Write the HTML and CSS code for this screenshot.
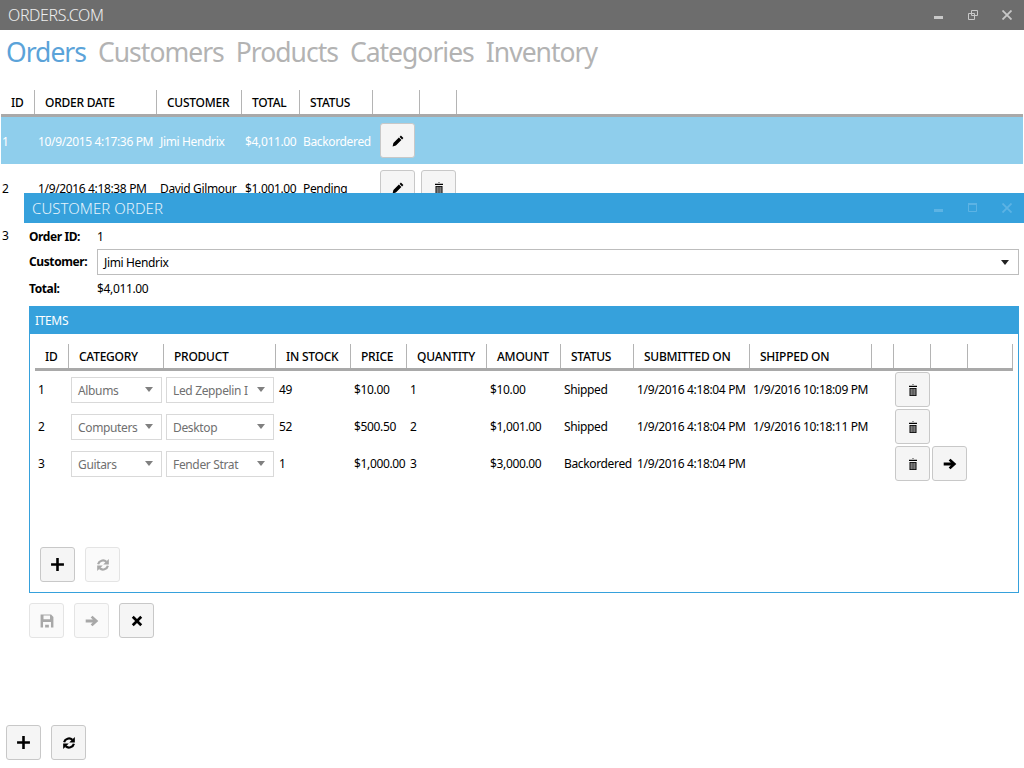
FILE: index.html
```html
<!DOCTYPE html>
<html lang="en">
<head>
<meta charset="utf-8">
<title>Orders.com</title>
<link rel="stylesheet" href="styles.css">
</head>
<body>
<svg class="sprite" xmlns="http://www.w3.org/2000/svg">
  <symbol id="i-pencil" viewBox="0 0 12 12"><path d="M8.9.6l2.5 2.500-1.300 1.300-2.500-2.500zM6.900 2.600l2.500 2.500-5.500 5.500-3.300.8.800-3.300z" fill="currentColor"/></symbol>
  <symbol id="i-trash" viewBox="0 0 12 12"><path d="M5 .2h2v.7H5z" fill="currentColor" opacity=".5"/><path d="M2 1.800h8v1.300H2zM2.500 4h7v8h-7zM3.700 4.800v6.400h.8V4.800zm1.900 0v6.400h.8V4.800zm1.900 0v6.400h.8V4.800z" fill="currentColor" fill-rule="evenodd"/></symbol>
  <symbol id="i-plus" viewBox="0 0 14 14"><path d="M5.800 1h2.400v4.800H13v2.400H8.200V13H5.800V8.200H1V5.800h4.800z" fill="currentColor"/></symbol>
  <symbol id="i-refresh" viewBox="0 0 12 12"><path d="M1.800 5.400A4.300 4.300 0 0 1 8.900 3.300M10.200 6.600A4.300 4.300 0 0 1 3.100 8.700" fill="none" stroke="currentColor" stroke-width="1.900"/><path d="M11 .8V5.600H6.200zM1 11.200V6.400H5.800z" fill="currentColor"/></symbol>
  <symbol id="i-arrow" viewBox="0 0 14 14"><path d="M7.500 1.800L13.300 7l-5.800 5.200-1.800-1.800 2.100-1.900H.7v-3h7.100L5.700 3.600z" fill="currentColor"/></symbol>
  <symbol id="i-x" viewBox="0 0 12 12"><path d="M2.700.8L6 4.100 9.300.8l1.900 1.900L7.900 6l3.300 3.300-1.900 1.900L6 7.900l-3.300 3.300-1.900-1.900L4.100 6 .8 2.700z" fill="currentColor"/></symbol>
  <symbol id="i-save" viewBox="0 0 12 12"><path d="M.5.5h9L11.500 2.500v9H.5zM3 1.200v3.300h5.600V1.200zM2.600 6.800v4.700h1.800V9.200h3.200v2.300h1.800V6.800z" fill="currentColor" fill-rule="evenodd"/></symbol>
</svg>

<header class="app-bar">
  <span class="app-title">ORDERS.COM</span>
  <div class="win-controls">
    <svg class="win-icon" viewBox="0 0 10 10"><rect x="0" y="6" width="9" height="3" fill="currentColor"/></svg>
    <svg class="win-icon" viewBox="0 0 10 10"><path d="M3.500.5h6v5h-6zM.5 3.500h6v6h-6z" fill="none" stroke="currentColor"/></svg>
    <svg class="win-icon" viewBox="0 0 10 10"><path d="M.5.5l9 9M9.500.5l-9 9" fill="none" stroke="currentColor" stroke-width="1.800"/></svg>
  </div>
</header>

<nav class="nav">
  <span class="nav-item is-active">Orders</span>
  <span class="nav-item">Customers</span>
  <span class="nav-item">Products</span>
  <span class="nav-item">Categories</span>
  <span class="nav-item">Inventory</span>
</nav>

<main class="orders">
  <div class="orders-row orders-head">
    <div class="th">ID</div><div class="th">ORDER DATE</div><div class="th">CUSTOMER</div><div class="th">TOTAL</div><div class="th">STATUS</div><div class="th"></div><div class="th"></div><div class="th-end"></div>
  </div>
  <div class="orders-row order is-selected">
    <div class="td-id">1</div><div class="td">10/9/2015 4:17:36 PM</div><div class="td">Jimi Hendrix</div><div class="td">$4,011.00</div><div class="td">Backordered</div>
    <div class="td-btn"><button class="btn"><svg class="ico-s"><use href="#i-pencil"/></svg></button></div>
    <div class="td-btn"></div>
  </div>
  <div class="orders-row order">
    <div class="td-id">2</div><div class="td">1/9/2016 4:18:38 PM</div><div class="td">David Gilmour</div><div class="td">$1,001.00</div><div class="td">Pending</div>
    <div class="td-btn"><button class="btn"><svg class="ico-s"><use href="#i-pencil"/></svg></button></div>
    <div class="td-btn"><button class="btn"><svg class="ico-s"><use href="#i-trash"/></svg></button></div>
  </div>
  <div class="orders-row order">
    <div class="td-id">3</div>
  </div>
</main>

<footer class="page-actions">
  <button class="btn"><svg class="ico-l"><use href="#i-plus"/></svg></button>
  <button class="btn"><svg class="ico-m"><use href="#i-refresh"/></svg></button>
</footer>

<section class="modal">
  <header class="modal-bar">
    <span class="modal-title">CUSTOMER ORDER</span>
    <div class="win-controls is-dim">
      <svg class="win-icon" viewBox="0 0 10 10"><rect x="0" y="6" width="9" height="3" fill="currentColor"/></svg>
      <svg class="win-icon" viewBox="0 0 10 10"><path d="M.5.5h8v8h-8z" fill="none" stroke="currentColor"/><rect x="0" y="0" width="9" height="2" fill="currentColor"/></svg>
      <svg class="win-icon" viewBox="0 0 10 10"><path d="M.5.5l9 9M9.500.5l-9 9" fill="none" stroke="currentColor" stroke-width="1.800"/></svg>
    </div>
  </header>
  <div class="modal-body">
    <div class="form">
      <div class="lbl lbl-id">Order ID:</div><div class="val val-id">1</div>
      <div class="lbl">Customer:</div>
      <div class="combo combo-wide"><span>Jimi Hendrix</span><i class="caret caret-dark"></i></div>
      <div class="lbl lbl-total">Total:</div><div class="val val-total">$4,011.00</div>
    </div>

    <section class="group">
      <h2 class="group-head">ITEMS</h2>
      <div class="group-body">
        <div class="items-row items-head">
          <div class="th">ID</div><div class="th">CATEGORY</div><div class="th">PRODUCT</div><div class="th">IN STOCK</div><div class="th">PRICE</div><div class="th">QUANTITY</div><div class="th">AMOUNT</div><div class="th">STATUS</div><div class="th">SUBMITTED ON</div><div class="th">SHIPPED ON</div><div class="th"></div><div class="th"></div><div class="th"></div><div class="th"></div>
        </div>
        <div class="items-row item">
          <div class="it">1</div>
          <div class="it-combo"><div class="combo"><span>Albums</span><i class="caret"></i></div></div>
          <div class="it-combo"><div class="combo"><span>Led Zeppelin I</span><i class="caret"></i></div></div>
          <div class="it">49</div><div class="it">$10.00</div><div class="it">1</div><div class="it">$10.00</div><div class="it">Shipped</div><div class="it">1/9/2016 4:18:04 PM</div><div class="it">1/9/2016 10:18:09 PM</div>
          <div class="it-btns"><button class="btn"><svg class="ico-s"><use href="#i-trash"/></svg></button></div>
        </div>
        <div class="items-row item">
          <div class="it">2</div>
          <div class="it-combo"><div class="combo"><span>Computers</span><i class="caret"></i></div></div>
          <div class="it-combo"><div class="combo"><span>Desktop</span><i class="caret"></i></div></div>
          <div class="it">52</div><div class="it">$500.50</div><div class="it">2</div><div class="it">$1,001.00</div><div class="it">Shipped</div><div class="it">1/9/2016 4:18:04 PM</div><div class="it">1/9/2016 10:18:11 PM</div>
          <div class="it-btns"><button class="btn"><svg class="ico-s"><use href="#i-trash"/></svg></button></div>
        </div>
        <div class="items-row item">
          <div class="it">3</div>
          <div class="it-combo"><div class="combo"><span>Guitars</span><i class="caret"></i></div></div>
          <div class="it-combo"><div class="combo"><span>Fender Strat</span><i class="caret"></i></div></div>
          <div class="it">1</div><div class="it">$1,000.00</div><div class="it">3</div><div class="it">$3,000.00</div><div class="it">Backordered</div><div class="it">1/9/2016 4:18:04 PM</div><div class="it"></div>
          <div class="it-btns"><button class="btn"><svg class="ico-s"><use href="#i-trash"/></svg></button><button class="btn"><svg class="ico-m"><use href="#i-arrow"/></svg></button></div>
        </div>
        <div class="group-actions">
          <button class="btn"><svg class="ico-l"><use href="#i-plus"/></svg></button>
          <button class="btn is-disabled"><svg class="ico-m"><use href="#i-refresh"/></svg></button>
        </div>
      </div>
    </section>

    <div class="modal-actions">
      <button class="btn is-disabled"><svg class="ico-m"><use href="#i-save"/></svg></button>
      <button class="btn is-disabled"><svg class="ico-m"><use href="#i-arrow"/></svg></button>
      <button class="btn"><svg class="ico-s"><use href="#i-x"/></svg></button>
    </div>
  </div>
</section>
</body>
</html>
```

FILE: styles.css
```css
* { box-sizing: border-box; }
html, body { margin: 0; height: 768px; overflow: hidden; }
body {
  position: relative;
  display: flex;
  flex-direction: column;
  background: #fff;
  color: #000;
  font-family: "Noto Sans", "Open Sans", sans-serif;
  font-size: 12px;
  letter-spacing: -0.35px;
}
.sprite { display: none; }

/* Window chrome */
.app-bar {
  height: 30px;
  flex: none;
  display: flex;
  align-items: center;
  justify-content: space-between;
  background: #6d6d6d;
  color: #fff;
  padding: 0 12px 0 8px;
}
.app-title { font-size: 16px; font-weight: 300; letter-spacing: -0.4px; color: #eee; }
.win-controls { display: flex; gap: 24px; color: #c8c8c8; }
.win-controls.is-dim { color: #5cb3e4; }
.win-icon { width: 10px; height: 10px; display: block; }

/* Navigation */
.nav {
  height: 60px;
  flex: none;
  display: flex;
  gap: 12px;
  padding: 2px 0 0 6px;
  font-size: 26.5px;
  line-height: 40px;
  letter-spacing: -1px;
  color: #b3b3b3;
}
.is-active { color: #5ba3d9; }

/* Orders table */
.orders { padding-left: 1px; flex: 1; min-height: 0; }
.orders-row {
  display: grid;
  grid-template-columns: 34px 122px 85px 58px 73px 47px 37px 1fr;
}
.orders-head { height: 27px; border-bottom: 3px solid #a9a9a9; margin-right: 1px; }
.th {
  display: flex;
  align-items: center;
  padding-left: 10px;
  border-right: 1px solid #b4b4b4;
  font-weight: 500;
  letter-spacing: -0.25px;
  white-space: nowrap;
  color: #000;
}
.th-end { min-width: 0; }
.order { height: 47px; margin-right: 1px; align-items: center; }
.order.is-selected { background: #8fceec; color: #fff; }
.td, .td-id { padding: 2px 0 0 3px; white-space: nowrap; }
.td-id { padding-left: 1px; }
.td-btn { display: flex; align-items: center; padding-left: 7px; }
.orders-row .td-btn + .td-btn { padding-left: 1px; }

/* Buttons */
.btn {
  flex: none;
  width: 35px;
  height: 35px;
  display: flex;
  align-items: center;
  justify-content: center;
  padding: 0;
  border: 1px solid #c8c8c8;
  border-radius: 3px;
  background: #f5f5f5;
  color: #000;
}
.btn.is-disabled { background: #fafafa; border-color: #e4e4e4; color: #a8a8a8; }
.ico-s { width: 12px; height: 12px; }
.ico-m { width: 14px; height: 14px; }
.ico-l { width: 15px; height: 15px; }

.page-actions { flex: none; display: flex; gap: 10px; padding: 0 0 8px 6px; }

/* Modal window */
.modal {
  position: absolute;
  left: 24px;
  right: 0;
  top: 193px;
  height: 470px;
  background: #fff;
}
.modal-bar {
  height: 30px;
  display: flex;
  align-items: center;
  justify-content: space-between;
  padding: 0 12px 0 8px;
  background: #36a1dc;
}
.modal-title { font-size: 15px; font-weight: 300; letter-spacing: 0.05px; color: #e6f3fb; }
.modal-body { padding: 0 5px; }

.form {
  display: grid;
  grid-template-columns: 68px 1fr;
  align-items: center;
  padding-top: 5px;
}
.lbl { font-weight: 700; letter-spacing: -0.4px; line-height: 18px; }
.val { line-height: 18px; }
.lbl-id { height: 21px; }
.val-id { height: 21px; }
.lbl-total { height: 27px; line-height: 27px; }
.val-total { height: 27px; line-height: 27px; }
.combo {
  display: flex;
  align-items: center;
  justify-content: space-between;
  height: 26px;
  padding: 0 6px;
  border: 1px solid #d9d9d9;
  color: #707070;
  white-space: nowrap;
  overflow: hidden;
}
.combo span { padding-top: 1px; }
.combo-wide { border-color: #bdbdbd; color: #000; }
.caret {
  flex: none;
  width: 0;
  height: 0;
  margin: 0 2px 0 0;
  border-left: 4px solid transparent;
  border-right: 4px solid transparent;
  border-top: 5px solid #808080;
}
.caret-dark { border-top-color: #222; margin-right: 3px; }

/* Items group */
.group { margin-top: 4px; border: 1px solid #36a1dc; height: 287px; }
.group-head {
  margin: 0;
  height: 27px;
  padding-left: 5px;
  background: #36a1dc;
  color: #fff;
  font-size: 12px;
  font-weight: 400;
  line-height: 27px;
}
.group-body { display: flex; flex-direction: column; height: 258px; padding: 10px 5px 0 5px; }
.items-row {
  display: grid;
  grid-template-columns: 34px 95px 112px 75px 56px 80px 74px 73px 116px 122px 22px 37px 37px 1fr;
}
.items-head { height: 27px; flex: none; border-bottom: 3px solid #a9a9a9; }
.item { height: 37px; flex: none; align-items: center; }
.it { padding-left: 3px; white-space: nowrap; }
.it-combo { padding: 0 2px; }
.it-btns { grid-column: 11 / -1; display: flex; gap: 2px; padding-left: 23px; }
.group-actions { display: flex; gap: 10px; margin-top: auto; padding: 0 0 10px 5px; }
.modal-actions { display: flex; gap: 10px; margin-top: 10px; }
```
